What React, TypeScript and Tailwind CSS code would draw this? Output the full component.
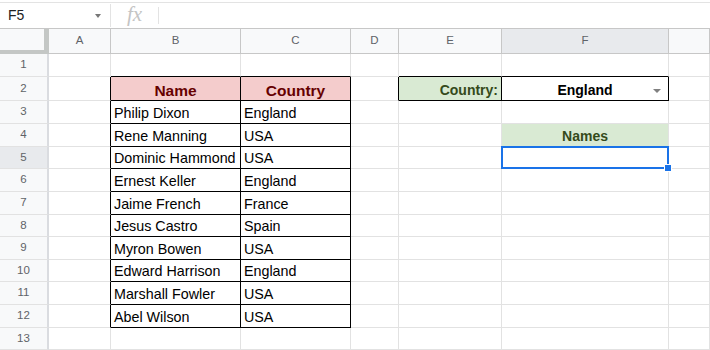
import React from "react";

const colWidths = [49, 62, 130, 110, 48, 103, 167, 41];
const rowHeights = [23, 24, 23, 23, 22, 23, 23, 22, 23, 22, 23, 23, 22];
const letters = ["", "A", "B", "C", "D", "E", "F", ""];

const people: [string, string][] = [
  ["Philip Dixon", "England"],
  ["Rene Manning", "USA"],
  ["Dominic Hammond", "USA"],
  ["Ernest Keller", "England"],
  ["Jaime French", "France"],
  ["Jesus Castro", "Spain"],
  ["Myron Bowen", "USA"],
  ["Edward Harrison", "England"],
  ["Marshall Fowler", "USA"],
  ["Abel Wilson", "USA"],
];

function blackRight(r: number, c: number) {
  if (r >= 2 && r <= 12 && c >= 1 && c <= 3) return true;
  if (r === 2 && c >= 4 && c <= 6) return true;
  return false;
}

function blackBottom(r: number, c: number) {
  if (r >= 1 && r <= 12 && (c === 2 || c === 3)) return true;
  if ((r === 1 || r === 2) && (c === 5 || c === 6)) return true;
  return false;
}

function CellContent({ r, c }: { r: number; c: number }) {
  if (r === 2 && c === 2) return <span className="w-full text-center font-bold text-[15.5px] text-[#660000]">Name</span>;
  if (r === 2 && c === 3) return <span className="w-full text-center font-bold text-[15.5px] text-[#660000]">Country</span>;
  if (r >= 3 && r <= 12 && (c === 2 || c === 3)) {
    const p = people[r - 3];
    return <span className="pl-[3px] whitespace-nowrap">{c === 2 ? p[0] : p[1]}</span>;
  }
  if (r === 2 && c === 5)
    return <span className="w-full text-right pr-[3px] font-bold text-[14px] text-[#354a1b]">Country:</span>;
  if (r === 2 && c === 6)
    return (
      <div className="relative w-full flex items-end">
        <span className="w-full text-center font-bold text-[14px] text-black">England</span>
        <div className="absolute right-[7px] bottom-[6px] w-0 h-0 border-l-[4px] border-r-[4px] border-t-[4px] border-l-transparent border-r-transparent border-t-[#808080]" />
      </div>
    );
  if (r === 4 && c === 6)
    return <span className="w-full text-center font-bold text-[14px] text-[#354a1b]">Names</span>;
  return null;
}

function cellBg(r: number, c: number) {
  if (r === 2 && (c === 2 || c === 3)) return "bg-[#f4cccc]";
  if (r === 2 && c === 5) return "bg-[#d9ead3]";
  if (r === 4 && c === 6) return "bg-[#d9ead3]";
  return "bg-white";
}

export default function App() {
  return (
    <div className="w-[710px] h-[350px] overflow-hidden bg-white text-[14.3px] text-black" style={{ fontFamily: '"Liberation Sans", Arial, sans-serif' }}>
      {/* formula bar */}
      <div className="pt-[2px]">
        <div className="flex h-[27px] border-t border-b border-t-[#e3e3e3] border-b-[#c7c7c7]">
          <div className="w-[111px] flex items-center justify-between pl-[8px] pr-[9px] border-r border-[#e3e3e3] my-[1px]">
            <span className="text-[14px] text-[#222]">F5</span>
            <div className="w-0 h-0 border-l-[3.5px] border-r-[3.5px] border-t-[4px] border-l-transparent border-r-transparent border-t-[#777]" />
          </div>
          <div className="w-[47px] flex items-center justify-center">
            <span className="text-[21px] italic text-[#c4c4c4] leading-none -mt-[3px]" style={{ fontFamily: '"Liberation Serif", serif' }}>fx</span>
          </div>
          <div className="w-px bg-[#e3e3e3] my-[4px]" />
        </div>
      </div>

      {/* grid */}
      <div
        className="grid"
        style={{
          gridTemplateColumns: colWidths.map((w) => `${w}px`).join(" "),
          gridTemplateRows: ["25px", ...rowHeights.map((h) => `${h}px`)].join(" "),
        }}
      >
        {/* header row */}
        {letters.map((l, c) =>
          c === 0 ? (
            <div key={`h${c}`} className="bg-[#f8f9fa] border-r-[5px] border-b-[4px] border-[#c4c7c5]" />
          ) : (
            <div
              key={`h${c}`}
              className={`flex items-center justify-center text-[11.5px] text-[#5f6368] border-r border-b border-[#c7c7c7] ${c === 6 ? "bg-[#e8eaed]" : "bg-[#f8f9fa]"}`}
            >
              {l}
            </div>
          )
        )}

        {rowHeights.map((_, i) => {
          const r = i + 1;
          return colWidths.map((_, c) => {
            if (c === 0) {
              return (
                <div
                  key={`${r}-${c}`}
                  className={`flex items-center justify-center text-[11.5px] text-[#5f6368] border-r-2 border-r-[#dadce0] border-b border-b-[#e2e2e2] ${r === 5 ? "bg-[#e8eaed]" : "bg-[#f8f9fa]"}`}
                >
                  {r}
                </div>
              );
            }
            const right = blackRight(r, c) ? "border-r-black" : "border-r-[#e2e2e2]";
            const bottom = blackBottom(r, c) ? "border-b-black" : "border-b-[#e2e2e2]";
            const selected = r === 5 && c === 6;
            return (
              <div
                key={`${r}-${c}`}
                className={`relative flex items-end pb-[1px] leading-[17px] border-r border-b ${right} ${bottom} ${cellBg(r, c)} ${selected ? "z-10" : ""}`}
              >
                <CellContent r={r} c={c} />
                {selected && (
                  <div className="absolute -left-px -top-px -right-px -bottom-px border-2 border-[#1a73e8]">
                    <div className="absolute -right-[5px] -bottom-[5px] w-[8px] h-[8px] bg-[#1a73e8] border border-white" />
                  </div>
                )}
              </div>
            );
          });
        })}
      </div>
    </div>
  );
}
